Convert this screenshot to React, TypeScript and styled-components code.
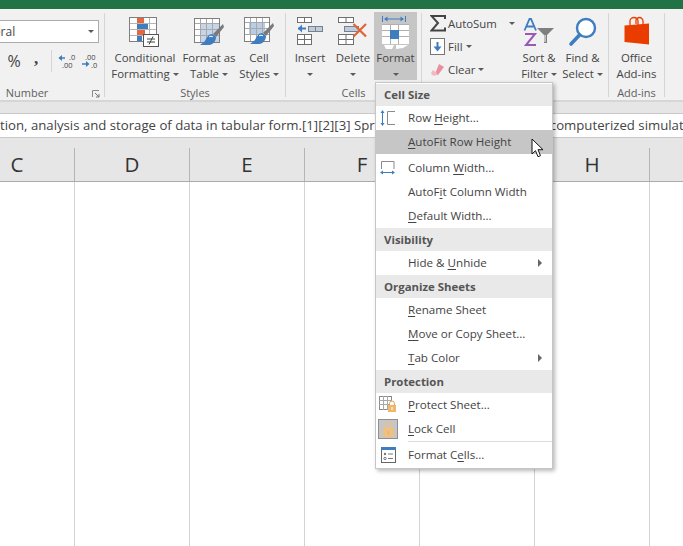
import React from "react";
import styled, { createGlobalStyle } from "styled-components";

const Global = createGlobalStyle`
  html, body { margin: 0; padding: 0; width: 683px; height: 546px; overflow: hidden; background: #fff; }
  body { font-family: "Open Sans", "Noto Sans", "Liberation Sans", sans-serif; }
  #root { width: 683px; height: 546px; }
`;

const Page = styled.div`
  position: relative;
  width: 683px;
  height: 546px;
  overflow: hidden;
  display: flex;
  flex-direction: column;
  background: #fff;
`;

const TitleBar = styled.div`
  height: 9px;
  flex: none;
  background: #217346;
`;

const Ribbon = styled.div`
  flex: none;
  height: 88px;
  padding-top: 3px;
  display: flex;
  background: #f1f1f1;
  border-bottom: 2px solid #d6d6d6;
`;

const Group = styled.section<{ $w: number; $pad?: number }>`
  flex: none;
  width: ${(p) => p.$w}px;
  height: 88px;
  box-sizing: border-box;
  padding-left: ${(p) => p.$pad ?? 0}px;
  position: relative;
  display: flex;
  flex-direction: column;
`;

const GroupBody = styled.div`
  height: 73px;
  flex: none;
  display: flex;
`;

const GroupLabel = styled.div<{ $off?: number }>`
  height: 15px;
  line-height: 16px;
  font-size: 11px;
  color: #5f5f5f;
  text-align: center;
  margin-left: ${(p) => p.$off ?? 0}px;
`;

const Divider = styled.div`
  flex: none;
  width: 1px;
  height: 84px;
  margin-top: 1px;
  background: #d6d6d6;
`;

const LargeButton = styled.div<{ $w: number; $active?: boolean }>`
  flex: none;
  width: ${(p) => p.$w}px;
  height: 68px;
  display: flex;
  flex-direction: column;
  align-items: center;
  background: ${(p) => (p.$active ? "#c6c6c6" : "transparent")};
`;

const IconSlot = styled.div<{ $top: number }>`
  height: 38px;
  box-sizing: border-box;
  padding-top: ${(p) => p.$top}px;
  flex: none;
  display: flex;
  justify-content: center;
  align-items: flex-start;
  align-self: stretch;
`;

const ButtonLine = styled.div`
  height: 16px;
  flex: none;
  line-height: 16px;
  font-size: 11.4px;
  color: #444;
  white-space: nowrap;
  display: flex;
  align-items: center;
  justify-content: center;
`;

const Caret = styled.span<{ $gap?: number }>`
  display: inline-block;
  width: 0;
  height: 0;
  margin-left: ${(p) => p.$gap ?? 3}px;
  border-left: 3px solid transparent;
  border-right: 3px solid transparent;
  border-top: 3px solid #5a5a5a;
`;

const NumberBody = styled.div`
  display: flex;
  flex-direction: column;
  height: 73px;
`;

const Combo = styled.div`
  margin-top: 8px;
  margin-left: -31px;
  width: 130px;
  height: 23px;
  box-sizing: border-box;
  flex: none;
  background: #fff;
  border: 1px solid #ababab;
  display: flex;
  align-items: center;
  justify-content: space-between;
  padding: 0 4px 0 1px;
  font-size: 12px;
  color: #444;
`;

const NumberRow = styled.div`
  display: flex;
  align-items: center;
  margin-top: 7px;
  height: 22px;
  color: #444;
`;

const Percent = styled.span`
  font-size: 16px;
  width: 28px;
  text-align: center;
`;

const Comma = styled.span`
  font-size: 17px;
  width: 14px;
  text-align: center;
  font-weight: 700;
  line-height: 12px;
  margin-right: 9px;
  padding: 0 0 4px 1px;
  box-sizing: content-box;
  font-family: "Liberation Serif", serif;
`;

const MiniSep = styled.i`
  width: 1px;
  height: 22px;
  margin-left: -1px;
  background: #d6d6d6;
  margin-right: 6px;
`;

const MiniGap = styled.i`
  width: 5px;
  flex: none;
`;

const Launcher = styled.svg`
  position: absolute;
  right: 4px;
  bottom: 2px;
`;

const EditColumn = styled.div`
  flex: none;
  width: 87px;
  display: flex;
  flex-direction: column;
`;

const EditRow = styled.div`
  height: 23px;
  flex: none;
  display: flex;
  align-items: center;
  font-size: 11.4px;
  color: #444;
  white-space: nowrap;
`;

const EditIcon = styled.span`
  width: 18px;
  flex: none;
  display: flex;
  align-items: center;
`;

const FormulaGap = styled.div`
  height: 11px;
  flex: none;
  background: #e6e6e6;
`;

const FormulaBar = styled.div`
  height: 25px;
  flex: none;
  box-sizing: border-box;
  background: #fff;
  border-top: 1px solid #c9c9c9;
  border-bottom: 1px solid #c9c9c9;
  font-size: 13.2px;
  line-height: 23px;
  color: #444;
  white-space: nowrap;
  overflow: hidden;
`;

const TightRun = styled.span`
  letter-spacing: -0.35px;
`;

const HeaderGap = styled.div`
  height: 10px;
  flex: none;
  background: #e6e6e6;
`;

const ColumnHeaders = styled.div`
  height: 34px;
  flex: none;
  display: flex;
  box-sizing: border-box;
  background: #e6e6e6;
  border-bottom: 1px solid #ababab;
`;

const HeaderCell = styled.div`
  flex: none;
  width: 115px;
  box-sizing: border-box;
  border-right: 1px solid #b5b5b5;
  text-align: center;
  font-size: 20.5px;
  line-height: 33px;
  color: #333;
  &:first-child {
    margin-left: -40px;
  }
`;

const Sheet = styled.div`
  flex: 1;
  display: flex;
  background: #fff;
`;

const SheetColumn = styled.div`
  flex: none;
  width: 115px;
  box-sizing: border-box;
  border-right: 1px solid #d4d4d4;
  &:first-child {
    margin-left: -40px;
  }
`;

const Menu = styled.div`
  position: absolute;
  left: 375px;
  top: 82px;
  width: 178px;
  box-sizing: border-box;
  padding: 1px 0;
  height: 387px;
  background: #fff;
  border: 1px solid #c6c6c6;
  box-shadow: 2px 2px 4px rgba(0, 0, 0, 0.28);
`;

const MenuHeader = styled.div<{ $h?: number }>`
  height: ${(p) => p.$h ?? 23}px;
  background: #e9e9e9;
  padding-left: 8px;
  font-size: 11.4px;
  font-weight: 700;
  line-height: ${(p) => p.$h ?? 23}px;
  color: #555;
`;

const MenuRow = styled.div<{ $active?: boolean; $gapTop?: number }>`
  height: 24px;
  margin-top: ${(p) => p.$gapTop ?? 0}px;
  display: flex;
  align-items: center;
  background: ${(p) => (p.$active ? "#c6c6c6" : "transparent")};
  font-size: 11.6px;
  color: #444;
  white-space: nowrap;
`;

const MenuIcon = styled.span`
  flex: none;
  width: 32px;
  height: 24px;
  box-sizing: border-box;
  padding-left: 3px;
  display: flex;
  align-items: center;
`;

const MenuText = styled.span`
  flex: 1;
  padding-bottom: 2px;
  u {
    text-underline-offset: 2px;
    text-decoration-thickness: 1px;
  }
`;

const SubArrow = styled.span`
  flex: none;
  margin-right: 10px;
  width: 0;
  height: 0;
  border-top: 4px solid transparent;
  border-bottom: 4px solid transparent;
  border-left: 4px solid #666;
`;

const MenuSeparator = styled.div`
  height: 1px;
  background: #dcdcdc;
  margin: 0 0 1px 32px;
`;

const MousePointer = styled.svg`
  position: absolute;
  left: 531px;
  top: 138px;
`;

const G = "#7f7f7f";
const B = "#3e7dc0";
const L = "#b9cde5";

const ConditionalIcon = () => (
  <svg width="34" height="34" viewBox="0 0 34 34">
    <g fill="none" stroke={G}>
      <rect x="1.500" y="1.500" width="27" height="24" fill="#fff" />
      <path d="M9.500 2v23M21.500 2v23M2 7.500h26M2 13.500h26M2 19.500h26" stroke="#b5b5b5" />
    </g>
    <rect x="9" y="2" width="7" height="5" fill="#e4673f" />
    <rect x="9" y="8" width="11" height="5" fill="#3e7dc0" />
    <rect x="9" y="14" width="8" height="5" fill="#e4673f" />
    <rect x="9" y="20" width="5" height="5" fill="#3e7dc0" />
    <rect x="15.500" y="18.500" width="15" height="12" fill="#fff" stroke="#555" />
    <path d="M19 23h8M19 26h8M25 20.500l-4 8" stroke="#444" strokeWidth="1" fill="none" />
  </svg>
);

const BrushTableIcon = ({ fill }: { fill: "corner" | "center" }) => (
  <svg width="32" height="32" viewBox="0 0 32 32">
    <rect x="1.500" y="1.500" width="25" height="24" fill="#fff" stroke={G} />
    {fill === "corner" ? (
      <rect x="7" y="6" width="19" height="19" fill="#c6d5e8" />
    ) : (
      <rect x="6" y="6" width="16" height="13" fill="#b9cde5" />
    )}
    <path d="M2 6.500h24M2 12.500h24M2 18.500h24M7.500 2v23M13.500 2v23M19.500 2v23" stroke="#a8a8a8" fill="none" />
    <path d="M30 7l-10 10 3 3 8-10z" fill="#7a7a7a" />
    <path d="M19 17c-3 0-5 3-6 5-1 3-4 4-6 6h9c4 0 7-4 7-8z" fill="#3e7dc0" />
    <path d="M16 20c1-1 3-1 4 0" stroke="#fff" fill="none" />
  </svg>
);

const TableFrag = ({ x, y, w, h, rows = 2 }: { x: number; y: number; w: number; h: number; rows?: number }) => (
  <g fill="none" stroke="#6f6f6f">
    <rect x={x + 0.5} y={y + 0.5} width={w} height={h} fill="#fff" />
    <path d={`M${x + w / 2 + 0.5} ${y}v${h}`} />
    {rows === 2 && <path d={`M${x} ${y + h / 2 + 0.5}h${w}`} />}
  </g>
);

const InsertIcon = () => (
  <svg width="28" height="32" viewBox="0 0 28 32">
    <TableFrag x={1} y={3} w={14} h={5} rows={1} />
    <path d="M2 14.500h8" stroke={B} strokeWidth="2" />
    <path d="M6 10.500l-4 4 4 4z" fill={B} />
    <rect x="12.500" y="12.500" width="14" height="5" fill={L} stroke={G} />
    <path d="M19.500 12v6" stroke={G} />
    <TableFrag x={1} y={20} w={14} h={10} />
  </svg>
);

const DeleteIcon = () => (
  <svg width="32" height="32" viewBox="0 0 32 32">
    <TableFrag x={1} y={3} w={15} h={5} rows={1} />
    <rect x="7.500" y="12.500" width="14" height="5" fill={L} stroke={G} />
    <TableFrag x={1} y={20} w={15} h={10} />
    <path d="M16.500 10l12.500 12.500M29 10L16.500 22.500" stroke="#e0633a" strokeWidth="2.200" fill="none" />
  </svg>
);

const FormatIcon = () => (
  <svg width="30" height="36" viewBox="0 0 30 36">
    <path d="M1.500 2v6M24.500 2v6" stroke={B} />
    <path d="M4 5h18" stroke={B} />
    <path d="M6.500 2.500L3 5l3.500 2.500zM19.500 2.500L23 5l-3.500 2.500z" fill={B} />
    <rect x="1" y="10" width="27" height="20" fill="#fff" />
    <path d="M1 10.500h27M1 16.500h27M1 22.500h27M9.500 10v20M17.500 10v20" stroke="#b0b0b0" fill="none" />
    <rect x="9" y="16" width="9" height="9" fill={B} />
    <path d="M3 31h10l-2 4H5zM15 31h12l-5 3-7 1z" fill="#fff" />
  </svg>
);

const SigmaIcon = () => (
  <svg width="16" height="17" viewBox="0 0 16 17">
    <path d="M15 4V1H1.500l6.500 7-6.500 7.500H15v-3" fill="none" stroke="#444" strokeWidth="2" />
  </svg>
);

const FillIcon = () => (
  <svg width="15" height="17" viewBox="0 0 15 17">
    <rect x="0.500" y="0.500" width="14" height="16" fill="#fff" stroke="#777" />
    <path d="M7.500 4v7" stroke={B} strokeWidth="2" />
    <path d="M3.500 8.500l4 5 4-5z" fill={B} />
  </svg>
);

const EraserIcon = () => (
  <svg width="15" height="14" viewBox="0 0 15 14">
    <path d="M9 1l5 3-6 8-3-1z" fill="#ea8f9f" />
    <path d="M3 7l4 3-2 3-3-1-1-2z" fill="#f3b9c2" />
  </svg>
);

const SortIcon = () => (
  <svg width="32" height="30" viewBox="0 0 32 30">
    <path d="M1.500 12.500L6.500 1h1.500l5 11.500M3.500 8.500h7.500" fill="none" stroke={B} strokeWidth="1.800" />
    <path d="M2 16h10L3 27h10" fill="none" stroke="#9b59b6" strokeWidth="2" />
    <path d="M14 10h17l-7 7v8h-3v-8z" fill="#7f7f7f" />
    <path d="M22 17v7" stroke="#fff" />
  </svg>
);

const FindIcon = () => (
  <svg width="32" height="32" viewBox="0 0 32 32">
    <circle cx="19" cy="11" r="9" fill="#fff" stroke={B} strokeWidth="2.400" />
    <path d="M12.500 18L4 27" stroke={B} strokeWidth="3.600" strokeLinecap="round" />
  </svg>
);

const OfficeIcon = () => (
  <svg width="28" height="32" viewBox="0 0 28 32">
    <path d="M7 9V5c0-2 2-3.500 4-3.500S15 3 15 5v4M13 8V4c0-1.500 2-2.500 3.500-2.500S20 3 20 5v3" fill="none" stroke="#eb3c00" strokeWidth="1.300" />
    <path d="M1.500 9.500L26 7.500v21L1.500 26z" fill="#eb3c00" />
  </svg>
);

const IncreaseIcon = () => (
  <svg width="18" height="14" viewBox="0 0 18 14">
    <path d="M1 4h6" stroke={B} strokeWidth="1.500" />
    <path d="M4 1L0.500 4 4 7z" fill={B} />
    <text x="11" y="6" fontSize="7.500" fill="#444" fontFamily="Open Sans, sans-serif">.0</text>
    <text x="4" y="13.500" fontSize="7.500" fill="#444" fontFamily="Open Sans, sans-serif">.00</text>
  </svg>
);

const DecreaseIcon = () => (
  <svg width="18" height="14" viewBox="0 0 18 14">
    <text x="4" y="6" fontSize="7.500" fill="#444" fontFamily="Open Sans, sans-serif">.00</text>
    <path d="M1 10h5" stroke={B} strokeWidth="1.500" />
    <path d="M5 7l3.500 3L5 13z" fill={B} />
    <text x="10" y="13.500" fontSize="7.500" fill="#444" fontFamily="Open Sans, sans-serif">.0</text>
  </svg>
);

const RowHeightIcon = () => (
  <svg width="20" height="18" viewBox="0 0 20 18">
    <path d="M3.500 3v12" stroke={B} />
    <path d="M3.500 1L1.500 4h4zM3.500 17l-2-3h4z" fill={B} />
    <path d="M16 2.500H8.500v13H16" fill="none" stroke="#8a8a8a" />
  </svg>
);

const ColumnWidthIcon = () => (
  <svg width="18" height="16" viewBox="0 0 18 16">
    <path d="M2.500 9V1.500h12.500V9" fill="none" stroke="#8a8a8a" />
    <path d="M3 12.500h11" stroke={B} />
    <path d="M1 12.500l3-2v4zM16 12.500l-3-2v4z" fill={B} />
  </svg>
);

const ProtectIcon = () => (
  <svg width="18" height="18" viewBox="0 0 18 18">
    <rect x="0.500" y="0.500" width="12" height="13" fill="#fff" stroke="#8a8a8a" />
    <path d="M0 4.500h13M0 8.500h13M4.500 0v14M8.500 0v14" stroke="#a8a8a8" fill="none" />
    <path d="M10.500 9V7.500a2.500 2.500 0 015 0V9" fill="#fff" stroke="#d9a55c" />
    <rect x="9" y="9" width="8" height="7" fill="#efb768" />
    <rect x="12.500" y="11" width="1" height="3" fill="#fff" />
  </svg>
);

const LockBox = styled.span`
  width: 20px;
  height: 20px;
  margin-left: -1px;
  box-sizing: border-box;
  background: #c6c6c6;
  border: 1px solid #8f8f8f;
  display: flex;
  align-items: center;
  justify-content: center;
`;

const LockIcon = () => (
  <svg width="13" height="15" viewBox="0 0 13 15">
    <path d="M3.500 6V4a3 3 0 016 0v2" fill="none" stroke="#efc07f" strokeWidth="1.300" />
    <rect x="1" y="6" width="11" height="9" rx="1" fill="#efc07f" />
    <rect x="6" y="9" width="1" height="3" fill="#e3ad68" />
  </svg>
);

const FormatCellsIcon = () => (
  <svg width="18" height="16" viewBox="-2 0 18 16">
    <rect x="0.500" y="0.500" width="14" height="15" fill="#fff" stroke="#666" />
    <rect x="0" y="0" width="15" height="3" fill={B} />
    <circle cx="4" cy="7" r="1.200" fill="#777" />
    <circle cx="4" cy="11.500" r="1.200" fill="none" stroke="#777" />
    <path d="M7 7h5M7 11.500h5" stroke="#777" />
  </svg>
);

const LauncherIcon = () => (
  <Launcher width="8" height="8" viewBox="0 0 8 8">
    <path d="M0.500 7V0.500H7" fill="none" stroke="#8a8a8a" />
    <path d="M3 3l4 4M7 4v3H4" fill="none" stroke="#777" />
  </Launcher>
);

const columns = ["C", "D", "E", "F", "G", "H", ""];

export default function App() {
  return (
    <Page>
      <Global />
      <TitleBar />
      <Ribbon>
        <Group $w={104}>
          <GroupBody>
            <NumberBody>
              <Combo>
                <span>General</span>
                <Caret />
              </Combo>
              <NumberRow>
                <Percent>%</Percent>
                <Comma>,</Comma>
                <MiniSep />
                <IncreaseIcon />
                <MiniGap />
                <DecreaseIcon />
              </NumberRow>
            </NumberBody>
          </GroupBody>
          <GroupLabel $off={-50}>Number</GroupLabel>
          <LauncherIcon />
        </Group>
        <Divider />
        <Group $w={180} $pad={5}>
          <GroupBody>
            <LargeButton $w={70}>
              <IconSlot $top={4}><ConditionalIcon /></IconSlot>
              <ButtonLine>Conditional</ButtonLine>
              <ButtonLine>Formatting<Caret /></ButtonLine>
            </LargeButton>
            <LargeButton $w={58}>
              <IconSlot $top={5}><BrushTableIcon fill="corner" /></IconSlot>
              <ButtonLine>Format as</ButtonLine>
              <ButtonLine>Table<Caret /></ButtonLine>
            </LargeButton>
            <LargeButton $w={42}>
              <IconSlot $top={4}><BrushTableIcon fill="center" /></IconSlot>
              <ButtonLine>Cell</ButtonLine>
              <ButtonLine>Styles<Caret /></ButtonLine>
            </LargeButton>
          </GroupBody>
          <GroupLabel $off={-5}>Styles</GroupLabel>
        </Group>
        <Divider />
        <Group $w={135} $pad={2}>
          <GroupBody>
            <LargeButton $w={44}>
              <IconSlot $top={2}><InsertIcon /></IconSlot>
              <ButtonLine>Insert</ButtonLine>
              <ButtonLine><Caret $gap={0} /></ButtonLine>
            </LargeButton>
            <LargeButton $w={42}>
              <IconSlot $top={2}><DeleteIcon /></IconSlot>
              <ButtonLine>Delete</ButtonLine>
              <ButtonLine><Caret $gap={0} /></ButtonLine>
            </LargeButton>
            <LargeButton $w={43} $active>
              <IconSlot $top={2}><FormatIcon /></IconSlot>
              <ButtonLine>Format</ButtonLine>
              <ButtonLine><Caret $gap={0} /></ButtonLine>
            </LargeButton>
          </GroupBody>
          <GroupLabel $off={-2}>Cells</GroupLabel>
        </Group>
        <Divider />
        <Group $w={186} $pad={8}>
          <GroupBody>
            <EditColumn>
              <EditRow>
                <EditIcon><SigmaIcon /></EditIcon>AutoSum<Caret $gap={12} />
              </EditRow>
              <EditRow>
                <EditIcon><FillIcon /></EditIcon>Fill<Caret />
              </EditRow>
              <EditRow>
                <EditIcon><EraserIcon /></EditIcon>Clear<Caret />
              </EditRow>
            </EditColumn>
            <LargeButton $w={44}>
              <IconSlot $top={6}><SortIcon /></IconSlot>
              <ButtonLine>Sort &amp;</ButtonLine>
              <ButtonLine>Filter<Caret /></ButtonLine>
            </LargeButton>
            <LargeButton $w={43}>
              <IconSlot $top={5}><FindIcon /></IconSlot>
              <ButtonLine>Find &amp;</ButtonLine>
              <ButtonLine>Select<Caret /></ButtonLine>
            </LargeButton>
          </GroupBody>
          <GroupLabel>Editing</GroupLabel>
        </Group>
        <Divider />
        <Group $w={55}>
          <GroupBody>
            <LargeButton $w={55}>
              <IconSlot $top={4}><OfficeIcon /></IconSlot>
              <ButtonLine>Office</ButtonLine>
              <ButtonLine>Add-ins</ButtonLine>
            </LargeButton>
          </GroupBody>
          <GroupLabel>Add-ins</GroupLabel>
        </Group>
        <Divider />
      </Ribbon>
      <FormulaGap />
      <FormulaBar>
        tion, analysis and storage of data in tabular form.[1][2][3] Spr<TightRun>eadsheets were developed as </TightRun>computerized simulations of paper accounting worksheets.
      </FormulaBar>
      <HeaderGap />
      <ColumnHeaders>
        {columns.map((c, i) => (
          <HeaderCell key={i}>{c}</HeaderCell>
        ))}
      </ColumnHeaders>
      <Sheet>
        {columns.map((c, i) => (
          <SheetColumn key={i} />
        ))}
      </Sheet>

      <Menu>
        <MenuHeader $h={22}>Cell Size</MenuHeader>
        <MenuRow><MenuIcon><RowHeightIcon /></MenuIcon><MenuText>Row <u>H</u>eight...</MenuText></MenuRow>
        <MenuRow $active><MenuIcon /><MenuText><u>A</u>utoFit Row Height</MenuText></MenuRow>
        <MenuRow $gapTop={2}><MenuIcon><ColumnWidthIcon /></MenuIcon><MenuText>Column <u>W</u>idth...</MenuText></MenuRow>
        <MenuRow><MenuIcon /><MenuText>AutoF<u>i</u>t Column Width</MenuText></MenuRow>
        <MenuRow><MenuIcon /><MenuText><u>D</u>efault Width...</MenuText></MenuRow>
        <MenuHeader>Visibility</MenuHeader>
        <MenuRow><MenuIcon /><MenuText>Hide &amp; <u>U</u>nhide</MenuText><SubArrow /></MenuRow>
        <MenuHeader>Organize Sheets</MenuHeader>
        <MenuRow><MenuIcon /><MenuText><u>R</u>ename Sheet</MenuText></MenuRow>
        <MenuRow><MenuIcon /><MenuText><u>M</u>ove or Copy Sheet...</MenuText></MenuRow>
        <MenuRow><MenuIcon /><MenuText><u>T</u>ab Color</MenuText><SubArrow /></MenuRow>
        <MenuHeader>Protection</MenuHeader>
        <MenuRow><MenuIcon><ProtectIcon /></MenuIcon><MenuText><u>P</u>rotect Sheet...</MenuText></MenuRow>
        <MenuRow><MenuIcon><LockBox><LockIcon /></LockBox></MenuIcon><MenuText><u>L</u>ock Cell</MenuText></MenuRow>
        <MenuSeparator />
        <MenuRow><MenuIcon><FormatCellsIcon /></MenuIcon><MenuText>Format C<u>e</u>lls...</MenuText></MenuRow>
      </Menu>

      <MousePointer width="14" height="20" viewBox="0 0 14 20">
        <path d="M1 1v15l3.500-3.300 2.500 6 2.500-1-2.500-6h5z" fill="#fff" stroke="#111" strokeWidth="1" strokeLinejoin="round" />
      </MousePointer>
    </Page>
  );
}
